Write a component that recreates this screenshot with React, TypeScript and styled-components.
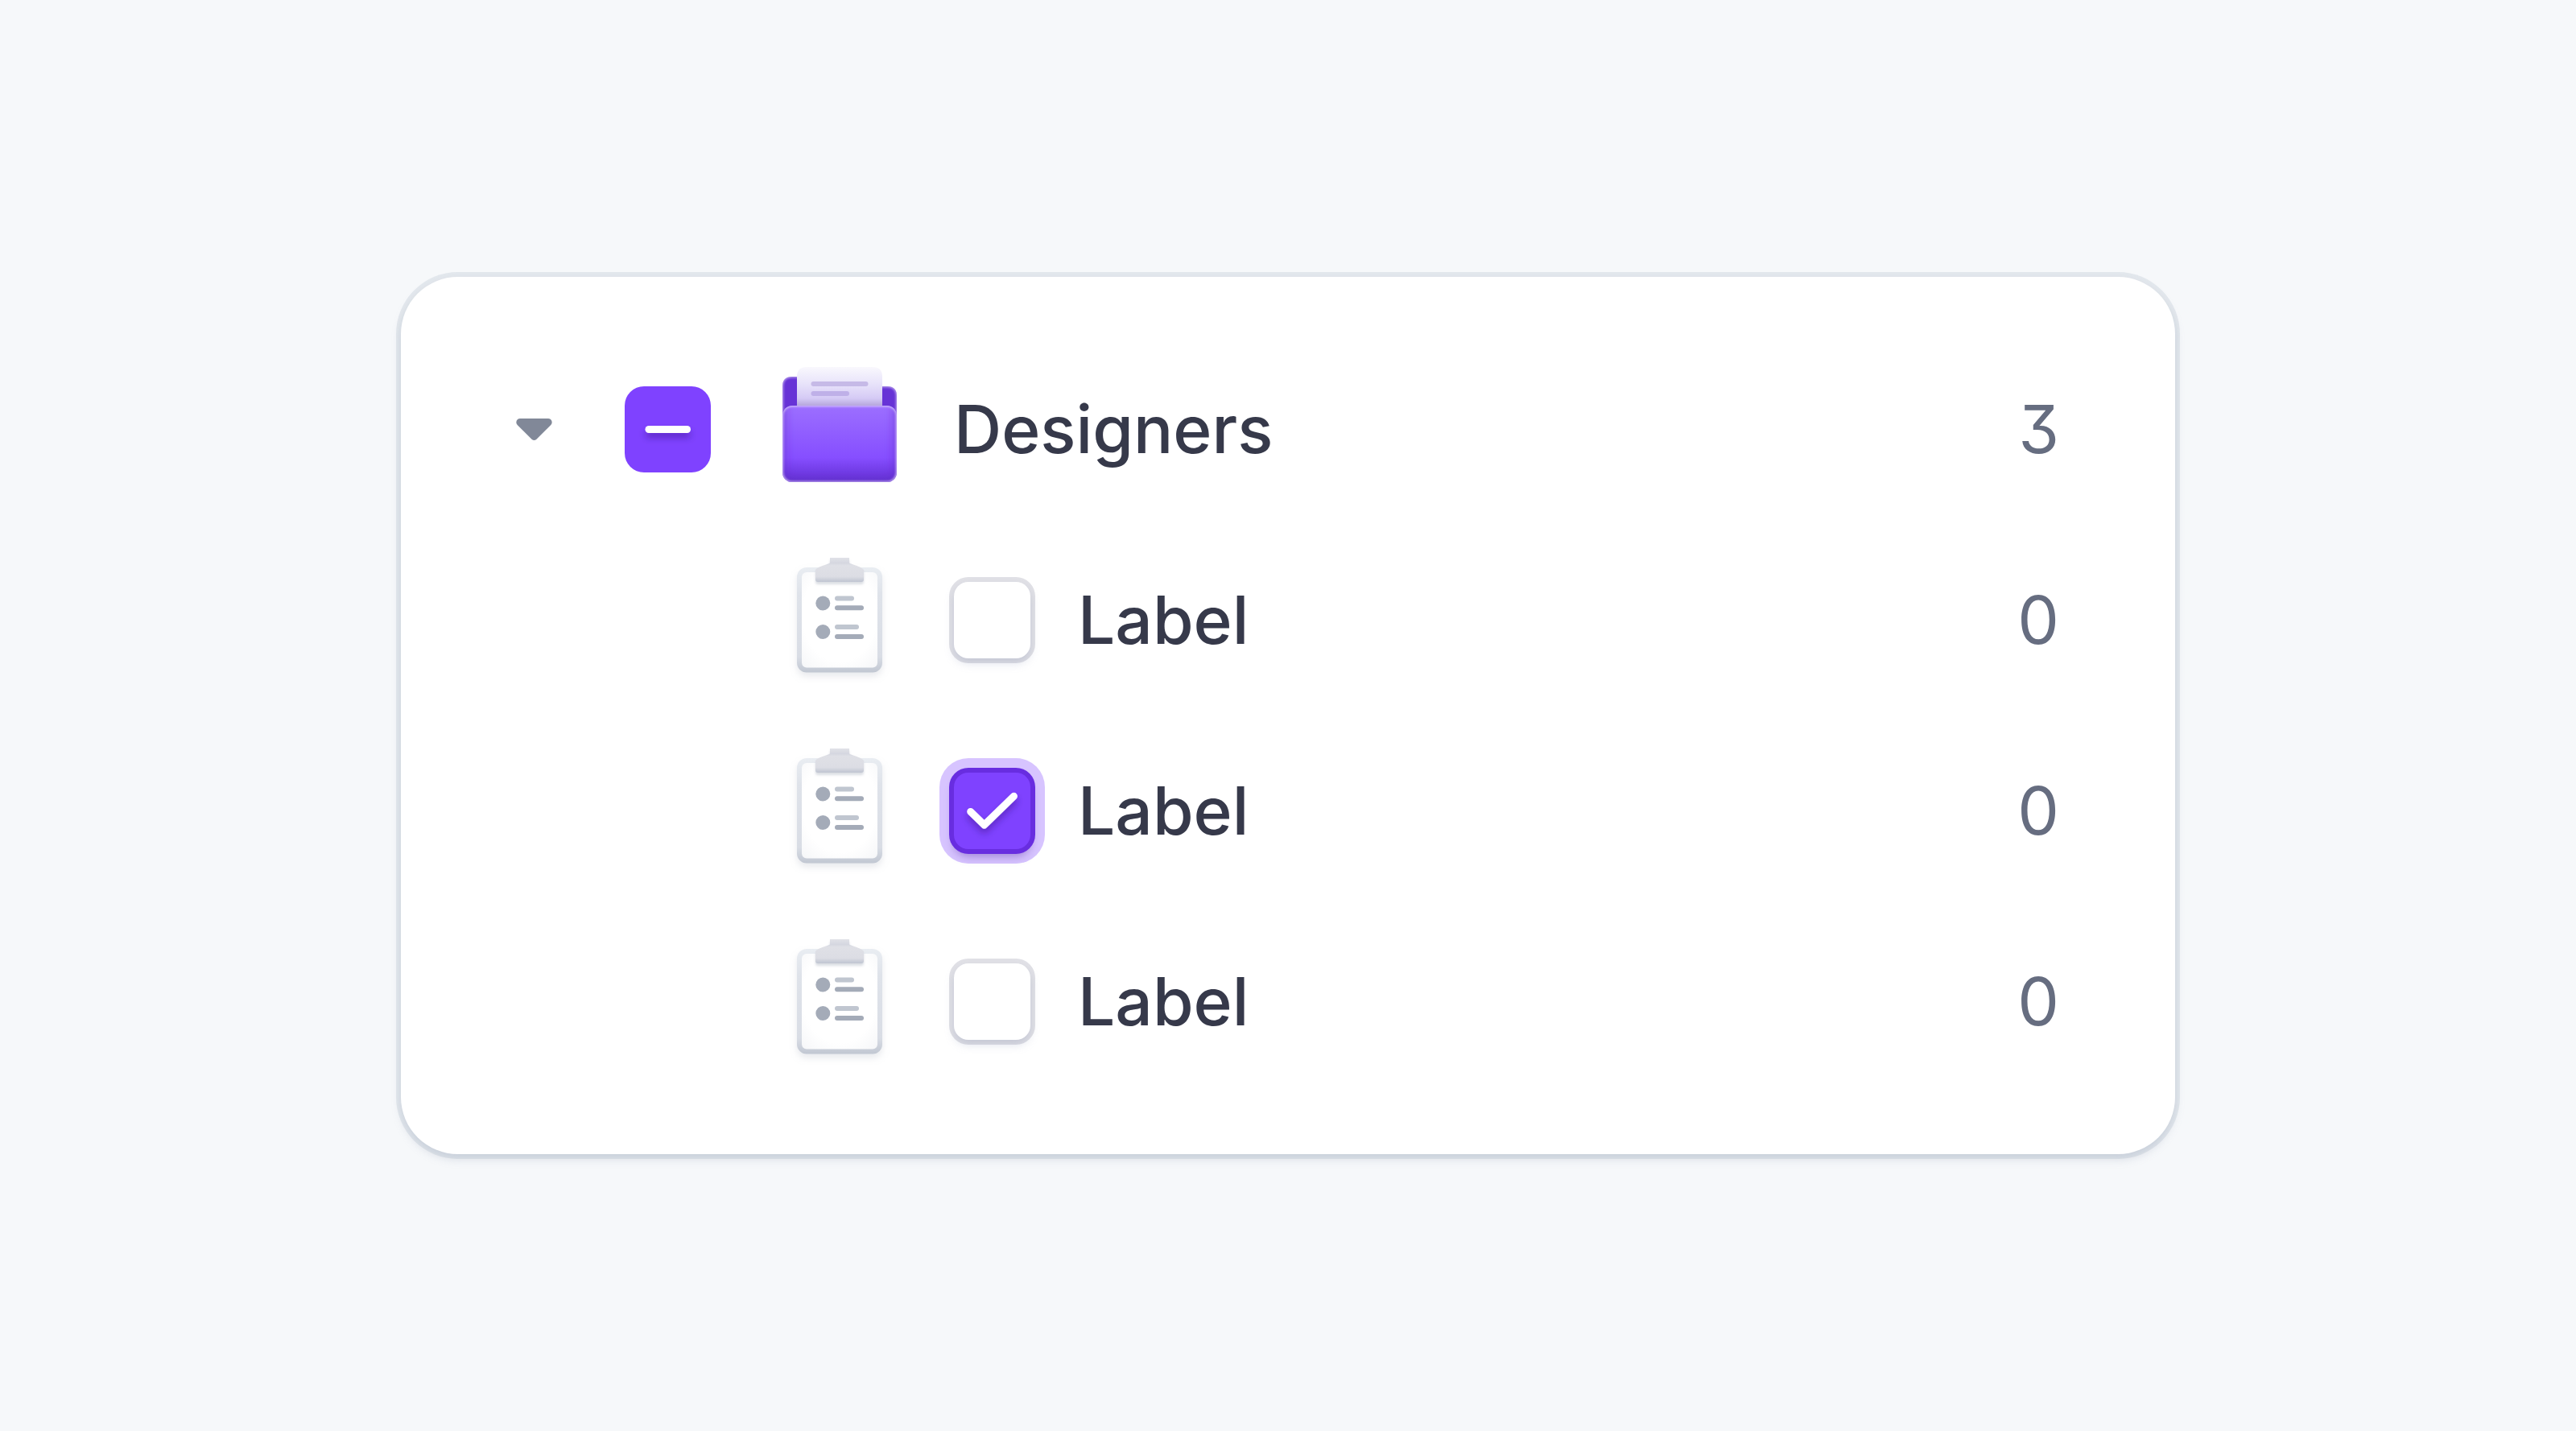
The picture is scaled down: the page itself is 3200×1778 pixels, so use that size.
import React, { useEffect, useRef, useState } from "react";
import styled, { createGlobalStyle, css } from "styled-components";

const GlobalStyle = createGlobalStyle`
  *, *::before, *::after { box-sizing: border-box; }
  body {
    margin: 0;
    background: #f6f8fa;
    font-family: Inter, "Liberation Sans", sans-serif;
  }
`;

const Page = styled.main`
  min-height: 100vh;
  display: flex;
  align-items: center;
  justify-content: center;
  padding: 72px;
`;

const Card = styled.section`
  width: 100%;
  max-width: 2204px;
  padding: 71px 0;
  border-radius: 71px;
  background: #ffffff;
  box-shadow:
    0 0 0 6px rgba(18, 55, 85, 0.08),
    0 6px 12px rgba(140, 152, 175, 0.28);
`;

const List = styled.ul`
  list-style: none;
  margin: 0;
  padding: 0;
`;

const Row = styled.div<{ $nested?: boolean }>`
  display: flex;
  align-items: center;
  height: 237px;
  padding-right: 144px;
  padding-left: ${({ $nested }) => ($nested ? 474 : 107)}px;
`;

const Toggle = styled.button<{ $open: boolean }>`
  flex: none;
  width: 118px;
  height: 118px;
  margin-right: 53px;
  padding: 0;
  border: 0;
  border-radius: 24px;
  background: none;
  cursor: pointer;

  svg {
    display: block;
    transform: rotate(${({ $open }) => ($open ? 0 : -90)}deg);
  }
`;

const CheckWrap = styled.span<{ $gap: number }>`
  flex: none;
  display: grid;
  width: 107px;
  height: 107px;
  margin-right: ${({ $gap }) => $gap}px;

  > * {
    grid-area: 1 / 1;
  }

  svg {
    pointer-events: none;
  }
`;

const filled = css`
  background: #7f42ff;
`;

const CheckInput = styled.input<{ $focusRing: boolean }>`
  appearance: none;
  width: 95px;
  height: 95px;
  margin: 6px;
  border-radius: 18px;
  background: #ffffff;
  cursor: pointer;
  box-shadow:
    0 0 0 6px rgba(6, 8, 46, 0.12),
    0 6px 12px rgba(140, 150, 185, 0.28);

  &:indeterminate {
    width: 107px;
    height: 107px;
    margin: 0;
    border-radius: 24px;
    box-shadow: none;
    ${filled}
  }

  &:checked {
    ${filled}
    box-shadow:
      0 0 0 6px #682de0,
      0 9px 12px rgba(60, 20, 140, 0.36)
      ${({ $focusRing }) => ($focusRing ? ", 0 0 0 18px #d7c4ff" : "")};
  }
`;

const Glyph = styled.svg`
  flex: none;
  width: 142px;
  height: 156px;
  margin-right: 65px;
`;

const FolderGlyph = styled(Glyph)`
  margin-right: 71px;
`;

const Label = styled.label`
  flex: 1;
  min-width: 0;
  font-size: 82px;
  font-weight: 500;
  line-height: 119px;
  color: #36394a;
  cursor: pointer;
`;

const Count = styled.span`
  font-size: 82px;
  line-height: 119px;
  color: #666d80;
  font-feature-settings: "cv09" 1;
`;

const CaretIcon = () => (
  <svg width="118" height="118" viewBox="0 0 118 118" aria-hidden="true">
    <path
      d="M41 45H76C80.100 45 82.200 50 79.300 52.900L61.500 70.700Q58.500 73.300 55.500 70.700L37.700 52.900C34.800 50 36.900 45 41 45Z"
      fill="#818898"
    />
  </svg>
);

const MarkShadow = ({ id }: { id: string }) => (
  <defs>
    <filter id={id} x="0" y="0" width="107" height="107" filterUnits="userSpaceOnUse">
      <feDropShadow dx="0" dy="6" stdDeviation="4" floodColor="#2a0d61" floodOpacity="0.36" />
    </filter>
  </defs>
);

const MinusMark = () => (
  <svg width="107" height="107" viewBox="0 0 107 107" aria-hidden="true">
    <MarkShadow id="minus-shadow" />
    <rect x="25.500" y="49" width="56.500" height="9" rx="4.5" fill="#fff" filter="url(#minus-shadow)" />
  </svg>
);

const CheckMark = () => (
  <svg width="107" height="107" viewBox="0 0 107 107" aria-hidden="true">
    <MarkShadow id="check-shadow" />
    <path
      d="M26.700 54.500L43.700 71L80.500 35.300"
      fill="none"
      stroke="#fff"
      strokeWidth="9"
      strokeLinecap="round"
      strokeLinejoin="round"
      filter="url(#check-shadow)"
    />
  </svg>
);

const FolderIcon = () => (
  <FolderGlyph viewBox="0 0 142 156" aria-hidden="true">
    <defs>
      <linearGradient id="folder-paper" x1="0" y1="0" x2="0" y2="1">
        <stop offset="0" stopColor="#f9f8fd" />
        <stop offset="0.35" stopColor="#e8e3fa" />
        <stop offset="0.65" stopColor="#d5caf5" />
        <stop offset="0.8" stopColor="#b6a6dc" />
      </linearGradient>
      <linearGradient id="folder-front" x1="0" y1="0" x2="0" y2="1">
        <stop offset="0" stopColor="#9c6fff" />
        <stop offset="0.65" stopColor="#8750ff" />
        <stop offset="1" stopColor="#7f42ff" />
      </linearGradient>
      <linearGradient id="folder-foot" x1="0" y1="0" x2="0" y2="1">
        <stop offset="0.68" stopColor="#5a2bc0" stopOpacity="0" />
        <stop offset="1" stopColor="#5a2bc0" stopOpacity="0.7" />
      </linearGradient>
      <clipPath id="folder-back-clip">
        <path d="M0 60V24Q0 12 12 12H60V24H130Q142 24 142 36V60Z" />
      </clipPath>
      <clipPath id="folder-front-clip">
        <rect y="48" width="142" height="95" rx="12" />
      </clipPath>
      <filter id="folder-soft" x="-20" y="0" width="182" height="170" filterUnits="userSpaceOnUse">
        <feGaussianBlur stdDeviation="5" />
      </filter>
      <filter id="folder-rim" x="-20" y="0" width="182" height="170" filterUnits="userSpaceOnUse">
        <feGaussianBlur stdDeviation="1.2" />
      </filter>
    </defs>
    <g clipPath="url(#folder-back-clip)">
      <rect width="142" height="70" fill="#6733d6" />
      <path
        d="M0 70V24Q0 12 12 12H60V24H130Q142 24 142 36V70"
        fill="none"
        stroke="#fff"
        strokeOpacity="0.45"
        strokeWidth="3"
        filter="url(#folder-rim)"
      />
    </g>
    <path d="M18 60V12Q18 0 30 0H112Q124 0 124 12V60Z" fill="url(#folder-paper)" />
    <rect x="35.500" y="18" width="71" height="6" rx="3" fill="#c6bae7" />
    <rect x="35.500" y="30" width="47.500" height="6" rx="3" fill="#bfb0e8" />
    <g clipPath="url(#folder-front-clip)">
      <rect y="48" width="142" height="95" fill="url(#folder-front)" />
      <path
        d="M0 48V131Q0 143 12 143H130Q142 143 142 131V48"
        fill="none"
        stroke="#5a2bc0"
        strokeOpacity="0.4"
        strokeWidth="10"
        filter="url(#folder-soft)"
      />
      <rect y="48" width="142" height="95" fill="url(#folder-foot)" />
      <rect
        y="48"
        width="142"
        height="95"
        rx="12"
        fill="none"
        stroke="#fff"
        strokeOpacity="0.5"
        strokeWidth="3"
        filter="url(#folder-rim)"
      />
    </g>
  </FolderGlyph>
);

const ClipboardIcon = ({ id }: { id: string }) => (
  <Glyph viewBox="0 0 142 156" aria-hidden="true">
    <defs>
      <linearGradient id={`${id}-board`} x1="0" y1="0" x2="0" y2="1">
        <stop offset="0" stopColor="#e9edf2" />
        <stop offset="0.25" stopColor="#dfe3ea" />
        <stop offset="0.85" stopColor="#d9dde5" />
        <stop offset="1" stopColor="#c1c7d2" />
      </linearGradient>
      <radialGradient id={`${id}-paper`} cx="0.5" cy="0.45" r="0.75">
        <stop offset="0.65" stopColor="#ffffff" />
        <stop offset="1" stopColor="#f5f6f8" />
      </radialGradient>
      <linearGradient id={`${id}-clip`} x1="0" y1="0" x2="0" y2="1">
        <stop offset="0" stopColor="#e1e2e8" />
        <stop offset="0.22" stopColor="#d5d7e0" />
        <stop offset="0.32" stopColor="#dfe0e6" />
        <stop offset="0.78" stopColor="#dcdde4" />
        <stop offset="1" stopColor="#bfc4d1" />
      </linearGradient>
      <filter id={`${id}-drop`} x="0" y="0" width="142" height="156" filterUnits="userSpaceOnUse">
        <feDropShadow dx="0" dy="5" stdDeviation="4" floodColor="#a4acb9" floodOpacity="0.25" />
      </filter>
      <filter id={`${id}-lift`} x="20" y="-6" width="102" height="50" filterUnits="userSpaceOnUse">
        <feDropShadow dx="0" dy="3" stdDeviation="1.5" floodColor="#a4acb9" floodOpacity="0.4" />
      </filter>
    </defs>
    <rect x="18" y="12" width="106" height="130.500" rx="12" fill={`url(#${id}-board)`} filter={`url(#${id}-drop)`} />
    <rect x="24" y="18" width="94" height="118.500" rx="6" fill={`url(#${id}-paper)`} />
    <path
      d="M59 0H83V6C83 8 98 10.500 101 15V27Q101 30 98 30H44Q41 30 41 27V15C44 10.500 59 8 59 6Z"
      fill={`url(#${id}-clip)`}
      filter={`url(#${id}-lift)`}
    />
    <g fill="#a4abb8">
      <circle cx="50.300" cy="56.500" r="9" />
      <circle cx="50.300" cy="92" r="9" />
      <rect x="65" y="59.300" width="36" height="6" rx="3" />
      <rect x="65" y="95" width="36" height="6" rx="3" />
    </g>
    <g fill="#c0c6d0">
      <rect x="65" y="47.500" width="24" height="6" rx="3" />
      <rect x="65" y="83" width="30" height="6" rx="3" />
    </g>
  </Glyph>
);

type CheckboxProps = {
  id: string;
  checked: boolean;
  indeterminate?: boolean;
  focusRing?: boolean;
  gap: number;
  onChange: () => void;
};

const Checkbox = ({ id, checked, indeterminate = false, focusRing = false, gap, onChange }: CheckboxProps) => {
  const ref = useRef<HTMLInputElement>(null);
  useEffect(() => {
    if (ref.current) ref.current.indeterminate = indeterminate;
  }, [indeterminate]);
  return (
    <CheckWrap $gap={gap}>
      <CheckInput
        ref={ref}
        id={id}
        type="checkbox"
        checked={checked}
        onChange={onChange}
        $focusRing={focusRing}
      />
      {indeterminate ? <MinusMark /> : checked ? <CheckMark /> : null}
    </CheckWrap>
  );
};

const members = [
  { id: "member-1", name: "Label", count: 0 },
  { id: "member-2", name: "Label", count: 0 },
  { id: "member-3", name: "Label", count: 0 },
];

export default function App() {
  const [open, setOpen] = useState(true);
  const [selected, setSelected] = useState<string[]>(["member-2"]);
  const [active, setActive] = useState("member-2");

  const all = selected.length === members.length;
  const some = selected.length > 0 && !all;

  const toggleMember = (id: string) => {
    setActive(id);
    setSelected((prev) => (prev.includes(id) ? prev.filter((m) => m !== id) : [...prev, id]));
  };

  return (
    <>
      <GlobalStyle />
      <Page>
        <Card>
          <List>
            <li>
              <Row>
                <Toggle
                  type="button"
                  $open={open}
                  aria-expanded={open}
                  aria-label="Toggle group"
                  onClick={() => setOpen(!open)}
                >
                  <CaretIcon />
                </Toggle>
                <Checkbox
                  id="group"
                  checked={all}
                  indeterminate={some}
                  gap={89}
                  onChange={() => setSelected(all ? [] : members.map((m) => m.id))}
                />
                <FolderIcon />
                <Label htmlFor="group">Designers</Label>
                <Count>{members.length}</Count>
              </Row>
              {open && (
                <List>
                  {members.map((member) => (
                    <li key={member.id}>
                      <Row $nested>
                        <ClipboardIcon id={member.id + "-icon"} />
                        <Checkbox
                          id={member.id}
                          checked={selected.includes(member.id)}
                          focusRing={active === member.id}
                          gap={53}
                          onChange={() => toggleMember(member.id)}
                        />
                        <Label htmlFor={member.id}>{member.name}</Label>
                        <Count>{member.count}</Count>
                      </Row>
                    </li>
                  ))}
                </List>
              )}
            </li>
          </List>
        </Card>
      </Page>
    </>
  );
}
